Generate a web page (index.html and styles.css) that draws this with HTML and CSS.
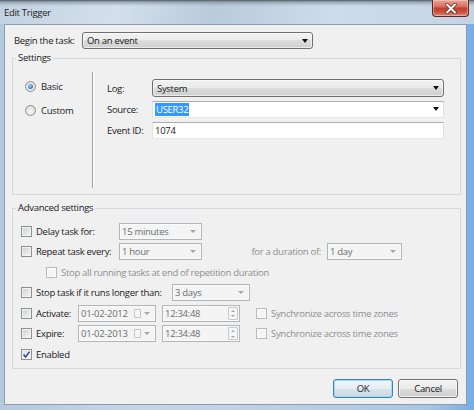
FILE: index.html
```html
<!DOCTYPE html>
<html>
<head>
<meta charset="utf-8">
<link rel="stylesheet" href="styles.css">
</head>
<body>
<div class="window">
  <div class="titlebar">
    <span class="title">Edit Trigger</span>
    <div class="close">
      <svg width="12" height="11" viewBox="0 0 12 11">
        <path d="M2 1.5 L10 9.5 M10 1.5 L2 9.5" stroke="#5a2420" stroke-width="3.4" stroke-linecap="round"/>
        <path d="M2 1.5 L10 9.5 M10 1.5 L2 9.5" stroke="#fff" stroke-width="2" stroke-linecap="round"/>
      </svg>
    </div>
  </div>
  <div class="client">
    <div class="begin-row">
      <span class="begin-lbl">Begin the task:</span>
      <div class="combo btn begin-combo"><span>On an event</span><i class="arrow"></i></div>
    </div>

    <fieldset class="group settings">
      <legend>Settings</legend>
      <div class="settings-body">
        <div class="radios">
          <div class="radio-row"><span class="radio on"></span><span>Basic</span></div>
          <div class="radio-row"><span class="radio"></span><span>Custom</span></div>
        </div>
        <div class="sep"></div>
        <div class="fields">
          <span class="flbl">Log:</span>
          <div class="combo btn log-combo"><span>System</span><i class="arrow"></i></div>
          <span class="flbl">Source:</span>
          <div class="combo field"><span class="sel">USER32</span><i class="arrow"></i></div>
          <span class="flbl">Event ID:</span>
          <div class="combo field"><span>1074</span></div>
        </div>
      </div>
    </fieldset>

    <fieldset class="group advanced">
      <legend>Advanced settings</legend>
      <div class="adv-body">
        <div class="row">
          <span class="cb"></span><span class="lbl w83">Delay task for:</span>
          <div class="combo dis w83"><span>15 minutes</span><i class="arrow grey"></i></div>
        </div>
        <div class="row">
          <span class="cb"></span><span class="lbl w83">Repeat task every:</span>
          <div class="combo dis w83"><span>1 hour</span><i class="arrow grey"></i></div>
          <span class="dur-lbl">for a duration of:</span>
          <div class="combo dis w75"><span>1 day</span><i class="arrow grey"></i></div>
        </div>
        <div class="row indent">
          <span class="cb dcb"></span><span class="lbl distext">Stop all running tasks at end of repetition duration</span>
        </div>
        <div class="row">
          <span class="cb"></span><span class="lbl w136">Stop task if it runs longer than:</span>
          <div class="combo dis w78"><span>3 days</span><i class="arrow grey"></i></div>
        </div>
        <div class="row">
          <span class="cb"></span><span class="lbl w42">Activate:</span>
          <div class="combo dis w78 date"><span>01-02-2012</span><span class="cal"><i class="calbox"></i><i class="arrow grey"></i></span></div>
          <div class="combo dis w78 time"><span>12:34:48</span><span class="spin"><i class="up"></i><i class="down"></i></span></div>
          <span class="cb dcb sync"></span><span class="lbl distext">Synchronize across time zones</span>
        </div>
        <div class="row">
          <span class="cb"></span><span class="lbl w42">Expire:</span>
          <div class="combo dis w78 date"><span>01-02-2013</span><span class="cal"><i class="calbox"></i><i class="arrow grey"></i></span></div>
          <div class="combo dis w78 time"><span>12:34:48</span><span class="spin"><i class="up"></i><i class="down"></i></span></div>
          <span class="cb dcb sync"></span><span class="lbl distext">Synchronize across time zones</span>
        </div>
        <div class="row">
          <span class="cb checked">
            <svg width="9" height="9" viewBox="0 0 9 9"><path d="M1.5 4.6 L3.6 7 L7.6 1.6" fill="none" stroke="#2a4a8a" stroke-width="1.5"/></svg>
          </span><span class="lbl">Enabled</span>
        </div>
      </div>
    </fieldset>

    <div class="buttons">
      <div class="button default">OK</div>
      <div class="button">Cancel</div>
    </div>
  </div>
</div>
</body>
</html>
```
FILE: styles.css
```css
* { box-sizing: border-box; }
html, body { margin: 0; padding: 0; }
body {
  width: 474px; height: 410px; overflow: hidden;
  font-family: "Open Sans", "Noto Sans", sans-serif;
  font-size: 9.5px;
  letter-spacing: -0.3px;
  color: #1a1a1a;
}
.window {
  width: 474px; height: 410px;
  display: flex; flex-direction: column;
  background: linear-gradient(to right, #b4c9de 0%, #c6d6e6 30%, #bccfe2 60%, #a9c6e4 90%, #78ade6 100%);
}
.titlebar {
  height: 24px; flex: none;
  display: flex; justify-content: space-between; align-items: flex-start;
  background:
    linear-gradient(to bottom, rgba(70,78,86,0.9) 0, rgba(120,134,148,0.6) 2px, rgba(255,255,255,0) 6px),
    linear-gradient(100deg, #c3d2e1 0%, #d3e0ec 25%, #b9cadb 45%, #cddcea 70%, #c4d4e4 100%);
}
.title { padding: 6px 0 0 4px; line-height: 13px; color: #1e1e1e; }
.close {
  width: 37px; height: 17px; margin-right: 5px;
  border: 1px solid #5b2622; border-top: none;
  border-radius: 0 0 4px 4px;
  background: linear-gradient(to bottom, #e8a597 0%, #d8705f 40%, #c2402d 52%, #c8503c 75%, #dd8a74 100%);
  box-shadow: inset 0 0 0 1px rgba(255,220,210,0.45);
  display: flex; align-items: center; justify-content: center;
}
.client {
  flex: none;
  width: 463px; height: 381px;
  margin-left: 4px;
  background: #f0f0f0;
  border: 1px solid #8c9cae;
  display: flex; flex-direction: column;
}
.begin-row {
  display: flex; align-items: center;
  height: 17px; margin-top: 7px; padding-left: 9px;
}
.begin-lbl { width: 68px; }
.begin-combo { width: 231px; }

.combo {
  height: 17px;
  display: flex; align-items: center; justify-content: space-between;
  padding: 0 4px 0 4px;
  line-height: 13px;
  white-space: nowrap;
}
.combo.btn {
  border: 1px solid #707070; border-radius: 3px;
  background: linear-gradient(to bottom, #f2f2f2 0%, #ebebeb 50%, #dddddd 50%, #cfcfcf 100%);
  box-shadow: inset 0 0 0 1px rgba(255,255,255,0.6);
}
.combo.field {
  background: #fff;
  border: 1px solid; border-color: #abadb3 #dbdfe6 #e3e9ef #e2e3ea;
  padding-left: 2px;
}
.sel { background: #3399ff; color: #fff; padding: 0 1px; }
.arrow {
  display: block; width: 0; height: 0;
  border-left: 3.5px solid transparent; border-right: 3.5px solid transparent;
  border-top: 4px solid #111;
}
.arrow.grey { border-top-color: #a6a6a6; border-left-width: 3px; border-right-width: 3px; border-top-width: 3px; }

.group {
  border: 1px solid #d5d9dd;
  padding: 0; min-width: 0;
  margin: 0 5px 0 7px;
}
.group legend {
  padding: 0 2px; margin-left: 3px;
  line-height: 12px;
}
.settings { margin-top: 3px; }
.settings-body { display: flex; height: 130px; }
.radios {
  width: 79px;
  padding: 12px 0 0 12px;
  display: flex; flex-direction: column; gap: 4px;
}
.radio-row { height: 20px; display: flex; align-items: center; gap: 5px; }
.radio {
  width: 11px; height: 11px; border-radius: 50%;
  border: 1px solid #8e8f8f;
  background: radial-gradient(circle at 50% 60%, #f6f6f6 0%, #e3e3e3 60%, #c7cbd0 100%);
  display: flex; align-items: center; justify-content: center;
}
.radio.on::after {
  content: ""; width: 5px; height: 5px; border-radius: 50%;
  background: radial-gradient(circle at 40% 35%, #a8d8f8 0%, #3e80c4 60%, #1c4f8e 100%);
}
.sep {
  width: 2px; margin: 8px 0 6px 0;
  border-left: 1px solid #a0a0a0; border-right: 1px solid #ffffff;
}
.fields {
  padding: 15px 0 0 13px;
  display: grid; grid-template-columns: 45px 292px; grid-auto-rows: 18px; row-gap: 3px;
  align-items: center;
}
.flbl { line-height: 13px; }
.log-combo { height: 18px; }

.advanced { margin-top: 7px; }
.adv-body { padding: 7px 0 3px 8px; }
.row { height: 20.5px; display: flex; align-items: center; white-space: nowrap; }
.row.indent { padding-left: 25px; }
.cb {
  flex: none;
  width: 11px; height: 11px; margin-right: 4px;
  border: 1px solid #8e8f8f;
  background: linear-gradient(135deg, #c9ccd1 0%, #e6e7e9 60%, #f6f6f6 100%);
  box-shadow: inset 0 0 0 1px #f4f4f4;
  display: flex; align-items: center; justify-content: center;
}
.cb.dcb { border-color: #b9b9b9; background: #f4f4f4; box-shadow: inset 0 0 0 1px #fbfbfb; }
.cb.checked { background: linear-gradient(135deg, #d4d8de 0%, #eef0f2 60%, #fafafa 100%); }
.lbl { line-height: 13px; }
.w83 { width: 83px; }
.w136 { width: 136px; }
.w42 { width: 42px; }
.w75 { width: 75px; }
.w78 { width: 78px; }
.distext { color: #8f8f8f; }
.dur-lbl { width: 125px; text-align: right; padding-right: 6px; color: #8f8f8f; line-height: 13px; }
.combo.dis {
  border: 1px solid #b3b6b9;
  background: #f4f4f4;
  box-shadow: inset 0 0 0 1px #fafafa;
  color: #6d6d6d;
  padding: 0 5px 0 2px;
}
.time { margin-left: 6px; padding-right: 1px !important; }
.sync { margin-left: 16px; }
.cal { display: flex; align-items: center; gap: 3px; }
.calbox {
  display: block; width: 7px; height: 9px;
  border: 1px solid #c4c4c4; border-radius: 1px; background: #f8f8f8;
}
.spin {
  width: 10px; height: 13px;
  border: 1px solid #c8c8c8; border-radius: 1px;
  display: flex; flex-direction: column; align-items: center; justify-content: space-around;
  background: #f6f6f6;
}
.spin .up, .spin .down { display: block; width: 0; height: 0; border-left: 2px solid transparent; border-right: 2px solid transparent; }
.spin .up { border-bottom: 2px solid #a8a8a8; }
.spin .down { border-top: 2px solid #a8a8a8; }

.buttons {
  display: flex; justify-content: flex-end; gap: 5px;
  margin-top: 10px; padding-right: 8px;
}
.button {
  width: 60px; height: 19px;
  border: 1px solid #707070; border-radius: 3px;
  background: linear-gradient(to bottom, #f2f2f2 0%, #ebebeb 50%, #dddddd 50%, #cfcfcf 100%);
  box-shadow: inset 0 0 0 1px rgba(255,255,255,0.7);
  display: flex; align-items: center; justify-content: center;
  line-height: 13px;
}
.button.default {
  border-color: #3c7fb1;
  background: linear-gradient(to bottom, #f0f5f8 0%, #e6eef3 50%, #d7e3ea 50%, #cbdbe4 100%);
  box-shadow: inset 0 0 0 1px #9fdcf5;
}
```
